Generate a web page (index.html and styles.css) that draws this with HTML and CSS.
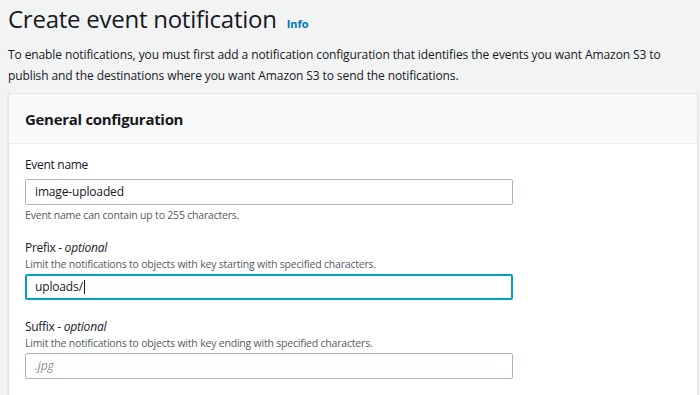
FILE: index.html
```html
<!DOCTYPE html>
<html>
<head>
<meta charset="utf-8">
<link rel="stylesheet" href="styles.css">
</head>
<body>
<div class="page">
  <header class="head">
    <h1 class="title">Create event notification</h1>
    <a class="info">Info</a>
  </header>
  <p class="intro">To enable notifications, you must first add a notification configuration that identifies the events you want Amazon S3 to publish and the destinations where you want Amazon S3 to send the notifications.</p>
  <section class="panel">
    <div class="panel-head"><h2 class="panel-title">General configuration</h2></div>
    <div class="panel-body">
      <div class="field">
        <label class="label">Event name</label>
        <div class="input">image-uploaded</div>
        <div class="hint">Event name can contain up to 255 characters.</div>
      </div>
      <div class="field">
        <label class="label">Prefix - <i>optional</i></label>
        <div class="desc">Limit the notifications to objects with key starting with specified characters.</div>
        <div class="input focus">uploads/<span class="caret"></span></div>
      </div>
      <div class="field">
        <label class="label">Suffix - <i>optional</i></label>
        <div class="desc">Limit the notifications to objects with key ending with specified characters.</div>
        <div class="input placeholder">.jpg</div>
      </div>
    </div>
  </section>
</div>
</body>
</html>
```
FILE: styles.css
```css
html, body { margin: 0; padding: 0; }
body {
  background: #f2f3f3;
  font-family: "Open Sans", "Noto Sans", sans-serif;
  color: #16191f;
  overflow: hidden;
  height: 395px;
}
.page { padding: 0 2px 0 8px; }
.head { display: flex; align-items: baseline; gap: 10px; height: 38px; }
.title { margin: 0; font-size: 24px; font-weight: 400; line-height: 38px; letter-spacing: -0.25px; }
.info { font-size: 11px; font-weight: 700; color: #0073bb; }
.intro { margin: 6px 0 0; font-size: 12px; line-height: 21px; letter-spacing: -0.1px; width: 680px; }
.panel {
  margin-top: 7px;
  background: #fff;
  border: 1px solid #e3e6e6;
  box-shadow: 0 1px 1px rgba(0,28,36,0.2);
}
.panel-head { background: #fafafa; border-bottom: 1px solid #eaeded; height: 49px; display: flex; align-items: center; padding-left: 16px; }
.panel-title { margin: 0; font-size: 15px; font-weight: 700; letter-spacing: -0.3px; }
.panel-body { padding: 12px 16px 20px; }
.field { margin-bottom: 17px; }
.field + .field { margin-top: 0; }
.field:last-child { margin-top: 18px; }
.label { display: block; font-size: 12px; line-height: 18px; letter-spacing: -0.3px; }
.label i { letter-spacing: -0.2px; }
.desc, .hint { font-size: 10.5px; color: #545b64; line-height: 14px; letter-spacing: -0.2px; }
.hint { margin-top: 3px; }
.input {
  box-sizing: border-box;
  width: 488px; height: 26px;
  border: 1px solid #aab7b8;
  border-radius: 2px;
  font-size: 12px; line-height: 24px;
  letter-spacing: -0.15px;
  padding-left: 9px;
  margin-top: 3px;
}
.label + .input { margin-top: 5px; }
.input.focus { border: 2px solid #00a1c9; padding-left: 8px; line-height: 22px; }
.caret { display: inline-block; width: 1px; height: 14px; background: #16191f; vertical-align: -3px; margin-left: 1px; }
.input.placeholder { color: #879596; font-style: italic; }
```
